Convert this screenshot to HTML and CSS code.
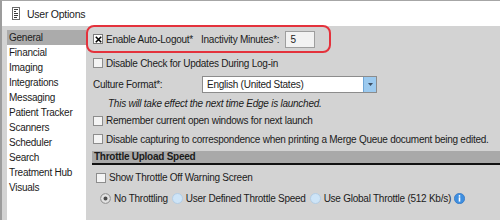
FILE: index.html
```html
<!DOCTYPE html>
<html lang="en">
<head>
    <meta charset="UTF-8">
    <title>User Options</title>
    <link rel="stylesheet" href="styles.css">
</head>
<body>
<div class="window">
    <div class="titlebar">
        <svg class="app-icon" width="10" height="13" viewBox="0 0 10 13">
            <rect x="1.5" y="0.5" width="7" height="12" fill="#fff" stroke="#6b6b6b"/>
            <rect x="3" y="2" width="4" height="1" fill="#3a3a3a"/>
            <rect x="3" y="4" width="2" height="1" fill="#3a3a3a"/>
            <rect x="3" y="6" width="4" height="1" fill="#3a3a3a"/>
            <rect x="3" y="8" width="4" height="1" fill="#3a3a3a"/>
            <rect x="3" y="10" width="3" height="1" fill="#3a3a3a"/>
        </svg>
        <span class="title">User Options</span>
    </div>
    <div class="main">
        <ul class="nav">
            <li class="active">General</li>
            <li>Financial</li>
            <li>Imaging</li>
            <li>Integrations</li>
            <li>Messaging</li>
            <li>Patient Tracker</li>
            <li>Scanners</li>
            <li>Scheduler</li>
            <li>Search</li>
            <li>Treatment Hub</li>
            <li>Visuals</li>
        </ul>
        <div class="content">
            <div class="highlight">
                <span class="check checked">
                    <svg width="7" height="7" viewBox="0 0 7 7"><path d="M0.8 0.8L6.2 6.2M6.2 0.8L0.8 6.2" stroke="#000" stroke-width="1.6"/></svg>
                </span>
                <span class="label">Enable Auto-Logout*</span>
                <span class="label minutes">Inactivity Minutes*:</span>
                <span class="textbox">5</span>
            </div>
            <div class="row r2">
                <span class="check"></span>
                <span class="label">Disable Check for Updates During Log-in</span>
            </div>
            <div class="row r3">
                <span class="label culture">Culture Format*:</span>
                <div class="select">
                    <span class="select-text">English (United States)</span>
                    <span class="select-btn">
                        <svg width="5" height="3" viewBox="0 0 5 3"><path d="M0 0H5L2.5 3Z" fill="#3d4f63"/></svg>
                    </span>
                </div>
            </div>
            <div class="row r4">
                <span class="note">This will take effect the next time Edge is launched.</span>
            </div>
            <div class="row r5">
                <span class="check"></span>
                <span class="label">Remember current open windows for next launch</span>
            </div>
            <div class="row r6">
                <span class="check"></span>
                <span class="label">Disable capturing to correspondence when printing a Merge Queue document being edited.</span>
            </div>
            <div class="section">Throttle Upload Speed</div>
            <div class="row r8">
                <span class="check"></span>
                <span class="label">Show Throttle Off Warning Screen</span>
            </div>
            <div class="row r9">
                <span class="radio selected"></span>
                <span class="label">No Throttling</span>
                <span class="radio"></span>
                <span class="label">User Defined Throttle Speed</span>
                <span class="radio"></span>
                <span class="label">Use Global Throttle (512 Kb/s)</span>
                <svg class="info" width="11" height="11" viewBox="0 0 11 11">
                    <circle cx="5.5" cy="5.5" r="5.2" fill="#3f8fe0" stroke="#2a6fbf" stroke-width="0.6"/>
                    <rect x="4.7" y="4.3" width="1.6" height="4.3" fill="#fff"/>
                    <circle cx="5.5" cy="2.9" r="0.9" fill="#fff"/>
                </svg>
            </div>
        </div>
    </div>
</div>
</body>
</html>
```

FILE: styles.css
```css
*{
    margin: 0;
    padding: 0;
    box-sizing: border-box;
}
body{
    width: 500px;
    height: 220px;
    overflow: hidden;
    font-family: "Liberation Sans", Arial, sans-serif;
    font-size: 10px;
    letter-spacing: -0.25px;
    color: #1b1b1b;
    background: #d3d3d3;
}
.window{
    height: 220px;
    border-left: 2px solid #9c9c9c;
    border-top: 1px solid #a6a6a6;
}
.titlebar{
    height: 25px;
    background: #fff;
    display: flex;
    align-items: center;
    padding-left: 9px;
}
.app-icon{
    margin-right: 6px;
}
.title{
    font-size: 10.5px;
    color: #222;
}
.main{
    display: flex;
    height: 194px;
    background: #d3d3d3;
}
.nav{
    list-style: none;
    width: 79px;
    flex-shrink: 0;
    margin-left: 5px;
    margin-top: 4px;
    background: #fff;
}
.nav li{
    height: 15px;
    line-height: 15px;
    padding-left: 2px;
    white-space: nowrap;
}
.nav li.active{
    background: #ababab;
}
.content{
    flex: 1;
    min-width: 0;
}
.highlight{
    display: flex;
    align-items: center;
    width: 245px;
    height: 28px;
    margin-top: -1px;
    padding-left: 5px;
    border: 2px solid #e4323c;
    border-radius: 8px;
    white-space: nowrap;
}
.row{
    display: flex;
    align-items: center;
    padding-left: 7px;
    white-space: nowrap;
}
.check{
    width: 10px;
    height: 10px;
    border: 1px solid #8d8d8d;
    background: #f4f4f4;
    display: flex;
    align-items: center;
    justify-content: center;
    margin-right: 3px;
    flex-shrink: 0;
}
.check.checked{
    background: #fff;
    border-color: #7a7a7a;
}
.minutes{
    margin-left: 8px;
}
.textbox{
    width: 30px;
    height: 17px;
    margin-left: 6px;
    background: #f2f2f2;
    border: 1px solid #9e9e9e;
    padding-left: 4px;
    line-height: 15px;
}
.r2{
    height: 20px;
}
.r3{
    height: 22px;
}
.culture{
    width: 109px;
}
.select{
    display: flex;
    width: 175px;
    height: 17px;
    background: #fff;
    border: 1px solid #8c8c8c;
}
.select-text{
    flex: 1;
    padding-left: 4px;
    line-height: 15px;
}
.select-btn{
    width: 13px;
    background: #9ccaef;
    border-left: 1px solid #6fa6d6;
    display: flex;
    align-items: center;
    justify-content: center;
}
.r4{
    height: 17px;
    padding-left: 22px;
}
.note{
    font-style: italic;
}
.r5{
    height: 17px;
}
.r6{
    height: 20px;
}
.section{
    margin-top: 2px;
    margin-left: 6px;
    height: 14px;
    line-height: 12px;
    padding-left: 2px;
    background: #a9a9a9;
    border-bottom: 2px solid #111;
    font-weight: bold;
}
.r8{
    height: 25px;
    padding-left: 10px;
}
.r9{
    height: 17px;
    padding-left: 14px;
}
.radio{
    width: 11px;
    height: 11px;
    border-radius: 50%;
    background: #cde4f7;
    border: 1px solid #b3cde4;
    margin-right: 3px;
    margin-left: 4px;
    flex-shrink: 0;
}
.radio:first-child{
    margin-left: 0;
}
.radio.selected{
    background: #e2e2e2;
    border-color: #9a9a9a;
    box-shadow: inset 0 0 0 2.5px #e2e2e2, inset 0 0 0 5px #4a4a4a;
}
.info{
    margin-left: 3px;
}
```
